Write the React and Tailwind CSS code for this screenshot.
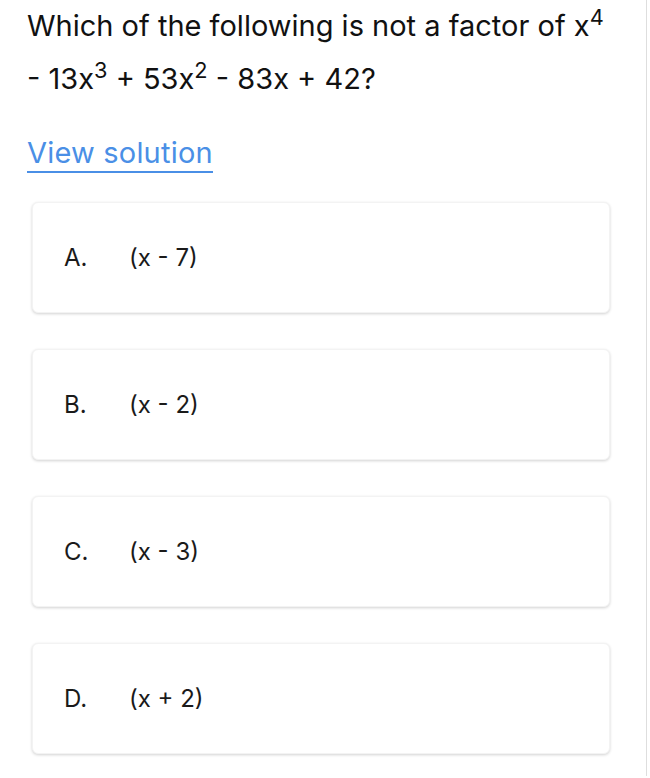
import React from "react";

const options = [
  { letter: "A.", text: "(x - 7)" },
  { letter: "B.", text: "(x - 2)" },
  { letter: "C.", text: "(x - 3)" },
  { letter: "D.", text: "(x + 2)" },
];

export default function App() {
  return (
    <div className="w-[650px] h-[778px] bg-white flex" style={{ fontFamily: "Inter, Roboto, sans-serif" }}>
      <div className="w-[647px] h-[776px] border-r border-[#dedede] pl-[27px] pr-[28px]">
        {/* question */}
        <p className="-mt-px text-[29px] leading-[53px] text-[#111]">
          Which of the following is not a factor of x<sup>4</sup> - 13x<sup>3</sup> + 53x<sup>2</sup> - 83x + 42?
        </p>

        <div className="mt-[31px] flex">
          <a className="text-[29px] leading-[34px] text-[#4a8fe6] tracking-[0.2px] pb-px border-b-2 border-[#4a8fe6]">
            View solution
          </a>
        </div>

        <div className="mt-[29px] ml-[5px] flex flex-col gap-[36px]">
          {options.map((o) => (
            <div
              key={o.letter}
              className="h-[111px] w-[578px] flex items-center pl-[31px] bg-white rounded-[6px] border border-[#f3f3f3] shadow-[0_1px_3px_rgba(0,0,0,0.18)]"
            >
              <span className="w-[65px] text-[24px] text-[#1a1a1a]">{o.letter}</span>
              <span className="text-[24px] text-[#1a1a1a]">{o.text}</span>
            </div>
          ))}
        </div>
      </div>
    </div>
  );
}
